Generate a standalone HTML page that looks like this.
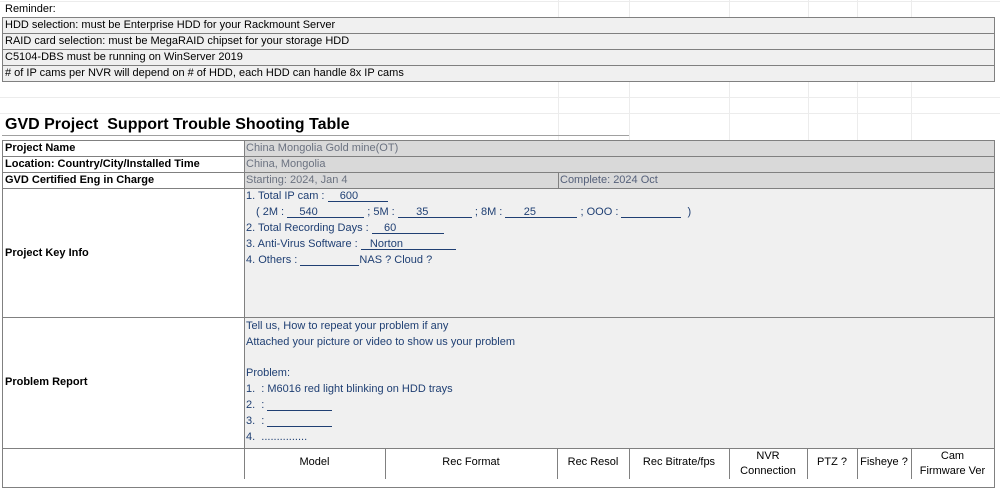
<!DOCTYPE html>
<html><head><meta charset="utf-8"><style>
*{margin:0;padding:0;box-sizing:border-box}
body{width:1000px;height:479px;overflow:hidden;background:#fff;font-family:"Liberation Sans",sans-serif;font-size:11px;color:#000;position:relative}
.a{position:absolute;white-space:nowrap}
.g{position:absolute;background:#ececec}
.b{position:absolute;border:1px solid #808080}
.bl{color:#1f3f73}
u{text-decoration:none;border-bottom:1px solid #1f3f73;display:inline-block;line-height:10px}
</style></head><body>
<div class="g" style="left:0;top:97px;width:1000px;height:1px"></div>
<div class="g" style="left:0;top:113px;width:1000px;height:1px"></div>
<div class="g" style="left:558px;top:0;width:1px;height:140px"></div>
<div class="g" style="left:629px;top:0;width:1px;height:140px"></div>
<div class="g" style="left:729px;top:0;width:1px;height:140px"></div>
<div class="g" style="left:808px;top:0;width:1px;height:140px"></div>
<div class="g" style="left:857px;top:0;width:1px;height:140px"></div>
<div class="g" style="left:911px;top:0;width:1px;height:140px"></div>
<div class="g" style="left:0;top:1px;width:1000px;height:1px"></div>

<div class="a" style="left:5px;top:3px">Reminder:</div>
<div class="b" style="left:2px;top:17px;width:993px;height:17px;background:#f0f0f0"></div>
<div class="b" style="left:2px;top:33px;width:993px;height:17px;background:#f0f0f0"></div>
<div class="b" style="left:2px;top:49px;width:993px;height:17px;background:#f0f0f0"></div>
<div class="b" style="left:2px;top:65px;width:993px;height:17px;background:#f0f0f0"></div>
<div class="a" style="left:5px;top:19px">HDD selection: must be Enterprise HDD for your Rackmount Server</div>
<div class="a" style="left:5px;top:35px">RAID card selection: must be MegaRAID chipset for your storage HDD</div>
<div class="a" style="left:5px;top:51px">C5104-DBS must be running on WinServer 2019</div>
<div class="a" style="left:5px;top:67px"># of IP cams per NVR will depend on # of HDD, each HDD can handle 8x IP cams</div>

<div class="a" style="left:5px;top:116px;font-size:16px;font-weight:bold">GVD Project&nbsp; Support Trouble Shooting Table</div>
<div style="position:absolute;left:2px;top:135px;width:627px;height:1px;background:#a0a0a0"></div>

<div class="b" style="left:2px;top:140px;width:993px;height:17px"></div>
<div class="b" style="left:244px;top:140px;width:751px;height:17px;background:#d9d9d9"></div>
<div class="b" style="left:2px;top:156px;width:993px;height:17px"></div>
<div class="b" style="left:244px;top:156px;width:751px;height:17px;background:#d9d9d9"></div>
<div class="b" style="left:2px;top:172px;width:993px;height:17px"></div>
<div class="b" style="left:244px;top:172px;width:315px;height:17px;background:#d9d9d9"></div>
<div class="b" style="left:558px;top:172px;width:437px;height:17px;background:#d9d9d9"></div>
<div class="b" style="left:2px;top:188px;width:993px;height:130px"></div>
<div class="b" style="left:244px;top:188px;width:751px;height:130px;background:#f0f0f0"></div>
<div class="b" style="left:2px;top:317px;width:993px;height:132px"></div>
<div class="b" style="left:244px;top:317px;width:751px;height:132px;background:#f0f0f0"></div>
<div class="b" style="left:2px;top:448px;width:993px;height:40px"></div>

<div class="a" style="left:5px;top:142px;font-weight:bold">Project Name</div>
<div class="a" style="left:5px;top:158px;font-weight:bold">Location: Country/City/Installed Time</div>
<div class="a" style="left:5px;top:174px;font-weight:bold">GVD Certified Eng in Charge</div>
<div class="a" style="left:246px;top:142px;color:#6b7280">China Mongolia Gold mine(OT)</div>
<div class="a" style="left:246px;top:158px;color:#6b7280">China, Mongolia</div>
<div class="a" style="left:246px;top:174px;color:#6b7280">Starting: 2024, Jan 4</div>
<div class="a" style="left:560px;top:174px;color:#55607a">Complete: 2024 Oct</div>

<div class="a" style="left:5px;top:247px;font-weight:bold">Project Key Info</div>
<div class="a bl" style="left:246px;top:190px">1. Total IP cam : <u style="width:60px">&nbsp;&nbsp;&nbsp;&nbsp;600</u></div>
<div class="a bl" style="left:256px;top:206px">( 2M : <u style="width:77px">&nbsp;&nbsp;&nbsp;&nbsp;540</u> ; 5M : <u style="width:74px">&nbsp;&nbsp;&nbsp;&nbsp;&nbsp;&nbsp;35</u> ; 8M : <u style="width:72px">&nbsp;&nbsp;&nbsp;&nbsp;&nbsp;&nbsp;25</u> ; OOO : <u style="width:60px">&nbsp;</u> &nbsp;)</div>
<div class="a bl" style="left:246px;top:222px">2. Total Recording Days : <u style="width:72px">&nbsp;&nbsp;&nbsp;&nbsp;60</u></div>
<div class="a bl" style="left:246px;top:238px">3. Anti-Virus Software : <u style="width:95px">&nbsp;&nbsp;&nbsp;Norton</u></div>
<div class="a bl" style="left:246px;top:254px">4. Others : <u style="width:59px">&nbsp;</u>NAS ? Cloud ?</div>

<div class="a" style="left:5px;top:376px;font-weight:bold">Problem Report</div>
<div class="a bl" style="left:246px;top:320px">Tell us, How to repeat your problem if any</div>
<div class="a bl" style="left:246px;top:336px">Attached your picture or video to show us your problem</div>
<div class="a bl" style="left:246px;top:367px">Problem:</div>
<div class="a bl" style="left:246px;top:383px">1.&nbsp; : M6016 red light blinking on HDD trays</div>
<div class="a bl" style="left:246px;top:399px">2.&nbsp; : <u style="width:65px">&nbsp;</u></div>
<div class="a bl" style="left:246px;top:415px">3.&nbsp; : <u style="width:65px">&nbsp;</u></div>
<div class="a bl" style="left:246px;top:431px">4.&nbsp; ...............</div>

<div style="position:absolute;left:244px;top:448px;width:1px;height:31px;background:#808080"></div>
<div style="position:absolute;left:385px;top:448px;width:1px;height:31px;background:#808080"></div>
<div style="position:absolute;left:557px;top:448px;width:1px;height:31px;background:#808080"></div>
<div style="position:absolute;left:629px;top:448px;width:1px;height:31px;background:#808080"></div>
<div style="position:absolute;left:729px;top:448px;width:1px;height:31px;background:#808080"></div>
<div style="position:absolute;left:807px;top:448px;width:1px;height:31px;background:#808080"></div>
<div style="position:absolute;left:857px;top:448px;width:1px;height:31px;background:#808080"></div>
<div style="position:absolute;left:911px;top:448px;width:1px;height:31px;background:#808080"></div>
<div class="a" style="left:244px;width:141px;text-align:center;top:456px">Model</div>
<div class="a" style="left:385px;width:172px;text-align:center;top:456px">Rec Format</div>
<div class="a" style="left:557px;width:72px;text-align:center;top:456px">Rec Resol</div>
<div class="a" style="left:629px;width:100px;text-align:center;top:456px">Rec Bitrate/fps</div>
<div class="a" style="left:729px;width:78px;text-align:center;top:449px;line-height:15px">NVR<br>Connection</div>
<div class="a" style="left:807px;width:50px;text-align:center;top:456px">PTZ ?</div>
<div class="a" style="left:857px;width:54px;text-align:center;top:456px">Fisheye ?</div>
<div class="a" style="left:911px;width:83px;text-align:center;top:449px;line-height:15px">Cam<br>Firmware Ver</div>
</body></html>
